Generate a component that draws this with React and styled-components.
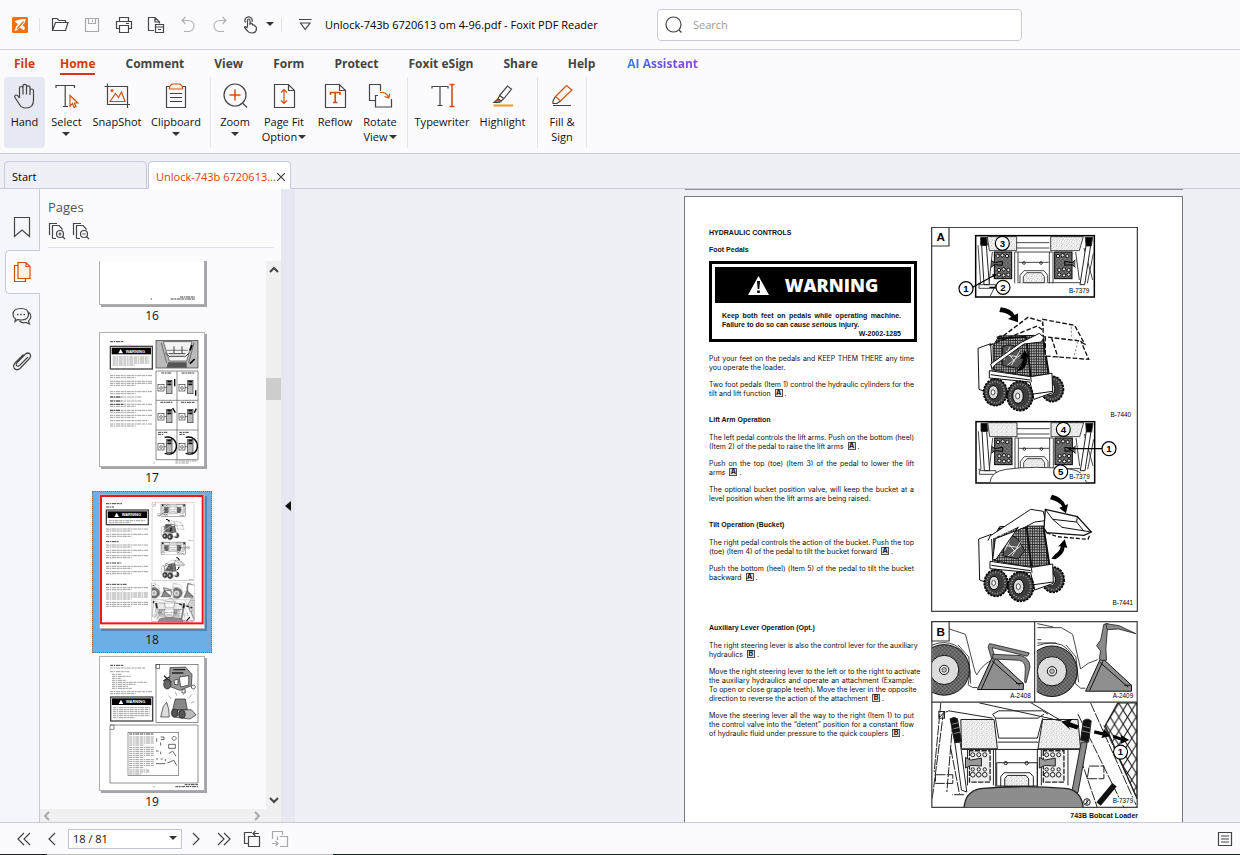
import React from 'react';
import styled, { createGlobalStyle } from 'styled-components';

const GlobalStyle = createGlobalStyle`
    * {
        box-sizing: border-box;
    }

    body {
        margin: 0;
        font-family: 'Open Sans', 'Noto Sans', sans-serif;
        font-size: 11px;
        color: #111;
        background: #fbfbfe;
    }

    button, input, select {
        font: inherit;
        color: inherit;
    }

    button {
        border: 0;
        padding: 0;
        background: none;
    }
`;

const Window = styled.div`
    display: flex;
    flex-direction: column;
    height: 100vh;
    overflow: hidden;
`;

const PatternDefs = styled.svg`
    display: block;
    flex: none;
`;

const Svg = styled.svg`
    display: block;
    flex: none;
    fill: none;
    stroke: #444;
    stroke-width: 1.2;
`;

/* ---------- title bar ---------- */

const TitleBar = styled.header`
    display: flex;
    align-items: center;
    flex: none;
    height: 50px;
    padding: 0 218px 0 12px;
    border-bottom: 1px solid #cbcfdf;
`;

const Divider = styled.div`
    width: 1px;
    height: 14px;
    margin: 0 ${p => p.$after || 4}px 0 ${p => p.$before || 11}px;
    background: #dfe1ea;
`;

const ToolButton = styled.button`
    display: flex;
    align-items: center;
    justify-content: center;
    gap: 6px;
    width: ${p => p.$width || 32}px;
    height: 28px;
`;

const Title = styled.h1`
    margin: 0 0 0 4px;
    padding-top: 1px;
    font-size: 11px;
    line-height: 16px;
    font-weight: 400;
    white-space: nowrap;
    color: #000;
`;

const SearchBox = styled.label`
    display: flex;
    align-items: center;
    gap: 10px;
    flex: 0 1 365px;
    height: 32px;
    margin-left: auto;
    padding: 0 7px;
    border: 1px solid #c9cbdb;
    border-radius: 4px;
    background: #fff;
`;

const SearchInput = styled.input`
    flex: 1;
    min-width: 0;
    border: 0;
    outline: 0;
    padding: 0;
    background: none;

    &::placeholder {
        color: #9b9b9b;
        opacity: 1;
    }
`;

/* ---------- ribbon ---------- */

const MenuTabs = styled.nav`
    display: flex;
    flex: none;
    gap: 30px;
    height: 27px;
    padding: 4px 14px 0;
`;

const MenuTab = styled.a`
    height: 19px;
    margin-right: ${p => (p.$accent && !p.$active ? -5 : 0)}px;
    font-size: 12px;
    line-height: 19px;
    font-weight: 700;
    text-decoration: none;
    white-space: nowrap;
    color: ${p => (p.$accent ? '#cf3a0c' : '#444')};
    box-shadow: 0 ${p => (p.$active ? 2 : 0)}px #cf3a0c;
`;

const AiTab = styled(MenuTab)`
    margin-left: 2px;
    background: linear-gradient(90deg, #3a82ea, #5a55e0 40%, #9540e0);
    background-clip: text;
    color: transparent;
    box-shadow: none;
`;

const Ribbon = styled.div`
    display: flex;
    flex: none;
    height: 77px;
    padding: 0 4px;
    border-bottom: 1px solid #c9cddc;
`;

const RibbonDivider = styled.div`
    width: 1px;
    height: 71px;
    margin: 0 4px;
    background: #e3e5ee;
`;

const RibbonButton = styled.button`
    display: flex;
    flex-direction: column;
    align-items: center;
    flex: none;
    gap: 4px;
    width: ${p => p.$width}px;
    height: 71px;
    padding-top: 5px;
    border-radius: 4px;
    background: ${p => (p.$active ? '#e6e9f1' : 'none')};
`;

const RibbonLabel = styled.span`
    line-height: 15px;
    white-space: nowrap;
    text-align: center;
`;

const Caret = styled.span`
    display: ${p => (p.$inline ? 'inline-block' : 'block')};
    width: 0;
    margin: ${p => (p.$inline ? '0 0 2px 1px' : '3px auto 0')};
    border: solid transparent;
    border-width: 4px 4px 0;
    border-top-color: #333;
`;

/* ---------- document tabs ---------- */

const DocTabs = styled.div`
    display: flex;
    align-items: flex-end;
    flex: none;
    gap: 1px;
    height: 35px;
    padding: 0 4px;
    background: #eff0f5;
    border-bottom: 1px solid #c6cadb;
`;

const DocTab = styled.div`
    display: flex;
    align-items: center;
    justify-content: space-between;
    width: 143px;
    height: 28px;
    margin-bottom: -1px;
    padding: 3px 5px 0 7px;
    border: 1px solid #c6cadb;
    border-bottom-color: ${p => (p.$active ? '#fff' : '#c6cadb')};
    border-radius: 4px 4px 0 0;
    background: ${p => (p.$active ? '#fff' : '#eff0f5')};
    color: ${p => (p.$active ? '#d0450f' : '#000')};
    white-space: nowrap;
`;

/* ---------- body ---------- */

const Body = styled.main`
    display: flex;
    flex: 1;
    min-height: 0;
`;

const Rail = styled.nav`
    display: flex;
    flex-direction: column;
    flex: none;
    gap: 1px;
    width: 40px;
    padding: 16px 0 0 5px;
    background: #f5f6fb;
    box-shadow: inset -1px 0 #c6cadb;
`;

const RailButton = styled.button`
    display: flex;
    align-items: center;
    justify-content: center;
    height: 44px;
    padding-right: 3px;
    border: 1px solid ${p => (p.$active ? '#c6cadb' : 'transparent')};
    border-right: 0;
    border-radius: 5px 0 0 5px;
    background: ${p => (p.$active ? '#fbfbfe' : 'none')};
`;

const Panel = styled.aside`
    display: flex;
    flex-direction: column;
    flex: none;
    width: 241px;
    background: #fbfbfe;
`;

const PanelHead = styled.div`
    margin: 0 7px 13px 8px;
    padding: 9px 0 7px;
    border-bottom: 1px solid #dddfe9;
`;

const PanelTitle = styled.h2`
    margin: 0 0 5px;
    font-size: 13px;
    line-height: 19px;
    font-weight: 400;
    color: #555;
`;

const PanelTools = styled.div`
    display: flex;
    gap: 6px;
`;

const PanelBody = styled.div`
    display: flex;
    flex: 1;
    min-height: 0;
`;

const ThumbArea = styled.div`
    flex: 1;
    overflow: hidden;
`;

const ThumbList = styled.div`
    display: flex;
    flex-direction: column;
    align-items: center;
    margin-top: -94px;
    padding-right: 2px;
`;

const ThumbItem = styled.button`
    display: flex;
    flex-direction: column;
    align-items: center;
    flex: none;
    width: 120px;
    height: 162px;
    padding-top: 2px;
    border: 1px ${p => (p.$active ? 'dotted #8a6a55' : 'solid transparent')};
    background: ${p => (p.$active ? '#6caee6' : 'none')};
`;

const ThumbPage = styled.svg`
    display: block;
    flex: none;
    width: 106px;
    height: 135px;
    margin-bottom: 2px;
    border: 1px solid #aeb0b4;
    background: #fff;
    box-shadow: 2px 2px 0 ${p => (p.$active ? '#4f86b8' : '#a2a4a8')};
`;

const ThumbLabel = styled.span`
    font-size: 12px;
    line-height: 18px;
`;

const ScrollBar = styled.div`
    display: flex;
    flex-direction: column;
    align-items: center;
    justify-content: space-between;
    width: 15px;
    padding: 4px 0;
    background: #f0f0f1;
`;

const ScrollThumb = styled.div`
    width: 15px;
    height: 22px;
    margin-bottom: 292px;
    background: #cdcdcd;
`;

const ScrollBottom = styled.div`
    display: flex;
    align-items: center;
    justify-content: space-between;
    flex: none;
    height: 13px;
    padding: 0 19px 0 2px;
    background: #f0f0f1;
`;

const Splitter = styled.button`
    display: flex;
    align-items: center;
    justify-content: center;
    flex: none;
    width: 14px;
    background: #e5e8f1;
`;

const DocView = styled.section`
    display: flex;
    flex-direction: column;
    align-items: flex-end;
    flex: 1;
    overflow: hidden;
    padding-right: 57px;
    background: #eff0f5;
`;

const PageEdge = styled.div`
    flex: none;
    width: 498px;
    height: 1px;
    margin-bottom: 6px;
    background: #90929e;
`;

/* ---------- manual page ---------- */

const Sheet = styled.article`
    display: grid;
    grid-template-columns: 208px 207px;
    column-gap: 14px;
    align-items: start;
    flex: none;
    width: 499px;
    height: 660px;
    padding: 30px 0 0 24px;
    border: 1px solid #77787f;
    background: #fff;
    color: #111;
    font-family: 'Liberation Sans', Arial, sans-serif;
    font-size: 7px;
    line-height: 9px;
`;

const Column = styled.div`
    display: flex;
    flex-direction: column;
    min-width: 0;
`;

const Heading = styled.h3`
    margin: ${p => p.$top || 0}px 0 ${p => (p.$tight ? 8 : 9)}px;
    font-size: 7px;
    line-height: 9px;
`;

const Para = styled.p`
    margin: 0 3px 8px 0;
    font-family: Inter, 'Liberation Sans', sans-serif;

    & + h3 {
        margin-top: 9px;
    }

    & + h3.far {
        margin-top: 33px;
    }
`;

const Line = styled.span`
    display: block;
    height: 9px;
    white-space: nowrap;
    text-align-last: ${p => (p.$full ? 'justify' : 'left')};
`;

const Ref = styled.b`
    display: inline-block;
    width: 8px;
    height: 8px;
    margin: 0 2px;
    border: 1px solid #555;
    background: #e2e2e2;
    line-height: 6px;
    text-align: center;
    text-align-last: center;
    vertical-align: top;
`;

const Warning = styled.div`
    height: 81px;
    margin: -1px 0 12px;
    padding: 3px;
    border: 3px solid #000;
    font-weight: 700;
`;

const WarningBanner = styled.div`
    display: flex;
    align-items: center;
    justify-content: center;
    gap: 16px;
    height: 36px;
    margin-bottom: 8px;
    background: #000;
    color: #fff;
    font-family: 'Open Sans', sans-serif;
    font-size: 18px;
    line-height: 20px;
    font-weight: 800;
`;

const WarningLine = styled(Line)`
    margin: 0 10px 0 7px;
    text-align-last: ${p => p.$align};
`;

const Figure = styled.svg`
    display: block;
    width: 207px;
    height: ${p => p.$height}px;
    margin-bottom: ${p => p.$gap}px;
`;

const Footer = styled.p`
    margin: 0;
    font-weight: 700;
    text-align: right;
`;

/* ---------- status bar ---------- */

const StatusBar = styled.footer`
    display: flex;
    align-items: center;
    flex: none;
    height: 32px;
    padding: 0 1px 0 10px;
    border-top: 1px solid #c6cadb;
`;

const NavButton = styled.button`
    display: flex;
    align-items: center;
    justify-content: center;
    width: 28px;
    height: 24px;
    margin-left: ${p => (p.$push ? 'auto' : 0)};
`;

const PageBox = styled.label`
    display: flex;
    align-items: center;
    width: 114px;
    height: 20px;
    margin: 0 0 0 2px;
    padding-right: 4px;
    border: 1px solid #c0c4d6;
    background: #fff;
`;

const PageSelect = styled.select`
    flex: 1;
    height: 18px;
    padding: 0 4px;
    border: 0;
    outline: 0;
    appearance: none;
    background: none;
`;

const BottomEdge = styled.div`
    flex: none;
    height: 1px;
    background: linear-gradient(90deg, #222 47px, #b9bbbf 47px, #b9bbbf 333px, #14252a 333px);
`;

/* ---------- icons ---------- */

const O = '#d2500f';

const Icon = ({ size = 18, children, ...rest }) => (
    <Svg width={size} height={size} viewBox={`0 0 ${size} ${size}`} aria-hidden="true" {...rest}>{children}</Svg>
);

const Logo = () => (
    <Icon size={16}>
        <rect width="16" height="16" rx="1.5" fill="#f0700f" stroke="none" />
        <path d="M2.5 4.2Q7 2 13.8 2Q13.2 6 10.5 8.2L13 10.5L12 13.6L8 10.6Q6 13.5 2.6 13.9Q3 10 6 7.3Z" fill="#fff" stroke="none" />
        <path d="M5 12L11.5 4.5" stroke="#f0700f" />
    </Icon>
);

const OpenIcon = () => <Icon><path d="M1.5 14.5V2.5H6L8 4.5H14.5V6.5M1.5 14.5L4.5 6.5H17L14.5 14.5Z" /></Icon>;
const SaveIcon = () => <Icon opacity="0.45"><path d="M2.500 2.500H15.500V15.500H2.500ZM5.500 2.500V7.500H12.500V2.500M9.500 4V6" /></Icon>;
const PrintIcon = () => <Icon><path d="M4.500 5.500V1.500H13.500V5.500M4.500 12.500H1.500V5.500H16.500V12.500H13.500M4.500 9.500H13.500V16.500H4.500ZM11 7.500H14" /></Icon>;
const PageDocIcon = () => <Icon><path d="M7 14.500H1.500V1.500H8L12.500 6V7.500M8 1.500V6H12.500M8.500 8.500H16.500V16.500H8.500ZM8.500 11H16.500M11 13.500H14" /></Icon>;
const UndoIcon = () => <Icon opacity="0.4"><path d="M6.500 1L3 4.500L6.500 8M3 4.500H9.500A5.500 5.500 0 0 1 9.500 15.500H5" /></Icon>;
const RedoIcon = () => <Icon opacity="0.4"><path d="M11.500 1L15 4.500L11.500 8M15 4.500H8.500A5.500 5.500 0 0 0 8.500 15.500H13" /></Icon>;
const TouchIcon = () => (
    <Icon>
        <path d="M6.500 11V4.500Q6.500 3 7.700 3Q9 3 9 4.500V9M9 7.500Q11.500 7 11.500 9Q14 8.500 14 10.300Q15.500 10.500 15.500 12Q15.500 17 11 17Q8 17 6.500 15L3.500 11.500Q3.500 9.500 6.500 12" />
        <path d="M4.500 6.500A3.700 3.700 0 1 1 11 6" />
    </Icon>
);
const CustomizeIcon = () => <Icon><path d="M3 3.500H15.500M4.500 7H14L9.200 13.500Z" /></Icon>;
const SearchIcon = () => <Icon><circle cx="8.500" cy="8.500" r="7.500" /><path d="M14 14L16.500 16.500" /></Icon>;

const HandIcon = () => (
    <Icon size={28}>
        <path d="M8.500 16V6.500Q8.500 4.500 10.200 4.500Q12 4.500 12 6.500V12.500M12 6V4Q12 2.300 13.700 2.300Q15.500 2.300 15.500 4V12.500M15.500 5.500Q15.500 3.800 17.200 3.800Q19 3.800 19 5.500V13M19 8.500Q19 7 20.700 7Q22.500 7 22.500 9V18Q22.500 26 15 26Q10.500 26 8.500 22.500L4 15.500Q3.200 13.500 5 13Q6.500 12.800 8.500 16" />
    </Icon>
);
const SelectIcon = () => (
    <Icon size={28}>
        <path d="M3 6V3.500H21.500V6M12.200 3.500V24.500M10 24.500H15" />
        <path d="M17 13.500V24L19.500 21.500L21 25.500L23 24.700L21.500 21H25Z" stroke={O} />
    </Icon>
);
const SnapIcon = () => (
    <Icon size={28}>
        <path d="M4.500 1.500V22.500H27M1.500 4.500H24.500V26" />
        <path d="M7 19.500L12.500 11.500L15.500 15.500L18.500 10L22 19.500Z" stroke={O} />
        <circle cx="9" cy="8.500" r="1" stroke={O} />
    </Icon>
);
const ClipboardIcon = () => (
    <Icon size={28}>
        <path d="M7.500 4.500H4.500V25.500H23.500V4.500H20.500M8 11.500H20M8 15.500H20M8 19.500H20" />
        <path d="M7.500 7V4.500L10 2H18L20.500 4.500V7Z" stroke={O} fill="#fff3e6" />
    </Icon>
);
const ZoomIcon = () => (
    <Icon size={28}>
        <circle cx="14" cy="13" r="11" /><path d="M21.500 21L26 25.500" />
        <path d="M14 7.500V18.500M8.500 13H19.500" stroke={O} strokeWidth="1.5" />
    </Icon>
);
const PageShape = () => <path d="M4.500 2.500H18.500L24.500 8.500V25.500H4.500ZM18.500 2.500V8.500H24.500" />;
const FitIcon = () => (
    <Icon size={28}><PageShape /><path d="M14 7.500V21.500M11 10.500L14 7.500L17 10.500M11 18.500L14 21.500L17 18.500" stroke={O} /></Icon>
);
const ReflowIcon = () => (
    <Icon size={28}><PageShape /><path d="M9.500 13V10.500H19V13M14.200 10.500V20.500M12 20.500H16.500" stroke={O} strokeWidth="1.600" /></Icon>
);
const RotateIcon = () => (
    <Icon size={28}>
        <path d="M9 18.500H3.500V2.500H14.500V9M12 13.500H9.500V25H25.500V17" />
        <path d="M14 10.500H17Q21 11 22.500 15.500M18.500 14.500L22.800 16L23.800 11.500" stroke={O} />
    </Icon>
);
const TypeIcon = () => (
    <Icon size={28}>
        <path d="M4 6.500V4.500H20V6.500M12 4.500V23.500M9.500 23.500H14.500" />
        <path d="M21.500 2.500H26.500M24 2.500V24.500M21.500 24.500H26.500" stroke={O} strokeWidth="1.600" />
    </Icon>
);
const HighlightIcon = () => (
    <Icon size={28}>
        <path d="M10.500 13.500L18.500 4L22.500 7L15 16.500ZM10.500 13.500L9 17L12 19L15 16.500" />
        <path d="M9 17L5 20.500H10.500L12 19Z" fill="#e8671b" />
        <path d="M4.500 23.500H24" stroke="#f0a030" strokeWidth="2.200" />
    </Icon>
);
const FillIcon = () => (
    <Icon size={28}>
        <path d="M7.500 14.500L5 19V21.500H9L12.500 19M5 23.500H23" />
        <path d="M7.500 14.500L18.500 3.500L24 8L12.500 19Z" stroke={O} fill="#fff3e6" />
    </Icon>
);

const BookmarkIcon = () => <Icon size={22}><path d="M3.500 1.500H18.500V20.500L11 14L3.500 20.500Z" /></Icon>;
const PagesIcon = () => (
    <Icon size={22}>
        <path d="M7 4.500H3.500V20.500H14.500V18" stroke={O} />
        <path d="M7 1.500H15L19 5.500V17.500H7ZM15 1.500V5.500H19" stroke={O} fill="#fff3e0" />
    </Icon>
);
const CommentIcon = () => (
    <Icon size={22}>
        <path d="M4 15.500L4.500 13Q2 11.500 2 8.500Q2 2.500 10 2.500Q17.500 2.500 17.500 8.500Q17.500 14 10 14Q8 14 6.500 13.500Z" />
        <path d="M17.500 6Q20 8 19.800 11Q19.500 13.500 17.500 15L18.500 18L15 16.500Q11 17.500 8.500 15" />
        <path d="M6 8.500H7.500M9.200 8.500H10.700M12.500 8.500H14" strokeWidth="1.600" />
    </Icon>
);
const ClipIcon = () => (
    <Icon size={22}><path d="M17 7L8.500 15.500Q6.500 17 5.500 15.500Q4.500 14.500 6 12.800L14.500 4Q17 2 19 4Q20.500 6 18.500 8.500L9 18.500Q6 21 3.500 18.500Q1.500 16 4 13L12.500 4.500" transform="translate(0 -1)" /></Icon>
);
const ThumbZoomIcon = ({ plus }) => (
    <Icon>
        <path d="M1.500 13V1.500H9M4.500 16.500V3.500H11L14.500 7.500M4.500 16.500H8" />
        <circle cx="12" cy="12" r="3.500" /><path d="M14.500 14.500L17 17M10.500 12H13.500" />
        {plus && <path d="M12 10.500V13.500" />}
    </Icon>
);

const Chevron = ({ double, flip }) => (
    <Icon size={16} transform={flip ? 'scale(-1 1)' : undefined}>
        {double ? <path d="M8 2L2 8L8 14M14 2L8 8L14 14" /> : <path d="M11 2L5 8L11 14" />}
    </Icon>
);
const PrevViewIcon = () => <Icon><path d="M5.500 13.500H1.500V2.500H9M5.500 6.500H16.500V16.500H5.500ZM16 3.500H10M12.500 1L10 3.500L12.500 6" /></Icon>;
const NextViewIcon = () => <Icon opacity="0.45"><path d="M1.500 9V1.500H11.500V5M9 6.500H16.500V16.500H9M6.500 6.500V10M1 13.500H7M4.500 11L7 13.500L4.500 16" /></Icon>;
const ListIcon = () => <Icon><path d="M2.500 2.500H15.500V15.500H2.500ZM5 6H13M5 9H13M5 12H13" /></Icon>;

/* ---------- line art of the manual ---------- */

const Patterns = () => (
    <PatternDefs width="0" height="0" aria-hidden="true">
        <defs>
            <pattern id="speck" width="15" height="13" patternUnits="userSpaceOnUse">
                <path d="M2 2h2M8 1h2M13 5h2M5 6h2M10 8h2M1 10h2M7 12h2" stroke="#444" strokeWidth="1.800" />
            </pattern>
            <pattern id="tone" width="4" height="4" patternUnits="userSpaceOnUse">
                <rect width="4" height="4" fill="#8c8c8c" />
                <path d="M0 1h2M2 3h2" stroke="#222" strokeWidth="1.400" />
            </pattern>
            <pattern id="mesh" width="7" height="8" patternUnits="userSpaceOnUse">
                <rect width="7" height="8" fill="#aaa" />
                <path d="M0 1h7M1 0v8" stroke="#111" strokeWidth="2.200" />
            </pattern>
            <pattern id="fence" width="26" height="42" patternUnits="userSpaceOnUse">
                <path d="M0 0L26 42M26 0L0 42" stroke="#111" strokeWidth="3" />
            </pattern>
        </defs>
    </PatternDefs>
);

const Callout = ({ x, y, n }) => (
    <g>
        <circle cx={x} cy={y} r="21" fill="#fff" stroke="#000" strokeWidth="3.500" />
        <text x={x} y={y + 10} fontSize="29" fontWeight="700" textAnchor="middle" fill="#000" stroke="none">{n}</text>
    </g>
);

const Pedal = ({ x, y, flip }) => (
    <g transform={`translate(${x} ${y})`}>
        <rect width="52" height="80" fill="url(#tone)" stroke="#000" strokeWidth="3" />
        {[[10, 12], [24, 10], [38, 12], [14, 54], [28, 52], [42, 54], [14, 68], [28, 70], [42, 68]].map(([a, b]) => (
            <circle key={a + '-' + b} cx={a} cy={b} r="5" fill="#ddd" stroke="#000" strokeWidth="2.500" />
        ))}
        <path d={flip ? 'M62 24L52 32L30 28V40L52 38L62 46' : 'M-10 24L0 32L24 28V40L0 38L-10 46'} fill="#666" stroke="#000" strokeWidth="3" />
    </g>
);

const Cockpit = ({ seat }) => (
    <g fill="none" stroke="#222" strokeWidth="2.500">
        <rect x="155" y="47" width="356" height="184" fill="#fff" stroke="#000" strokeWidth="4.500" />
        <path d="M190 50H278V92H196Z" fill="url(#speck)" />
        <path d="M380 50H478L466 92H380Z" fill="url(#speck)" />
        <path d="M278 68H376M278 84H376M272 96H386M272 96V190M282 96V190M376 96V190M387 96V190M284 127H374M284 188H470" />
        <circle cx="300" cy="129" r="4" /><circle cx="351" cy="129" r="4" />
        <path d="M288 188V166L300 152H360L371 166V188" fill="#fff" />
        <path d="M298 188V170L308 158H352L361 170V188Z" fill="url(#speck)" />
        <Pedal x={211} y={96} /><Pedal x={392} y={96} flip />
        <path d="M162 76L170 190H162M205 96L195 190M455 96L466 180M508 100L490 190M480 84L506 180" />
        <path d="M173 76L180 194H196L187 76ZM486 76L468 194H482L500 76Z" fill="#fff" strokeWidth="3" />
        <path d="M170 52H188L190 76H170ZM484 52H506L502 78H486Z" fill="#000" />
        <path d="M165 194H215V205H165Z" />
        {seat && <path d="M197 229Q200 196 246 190Q330 178 440 190Q480 196 486 229" fill="#fff" />}
        {!seat && <path d="M198 229L216 194" />}
        <path d="M434 202H498V222H434Z" fill="#fff" stroke="none" />
        <text x="496" y="218" fontSize="19" textAnchor="end" fill="#000" stroke="none">B-7379</text>
    </g>
);

const Wheel = ({ x, y, r }) => (
    <g>
        <ellipse cx={x} cy={y} rx={r * 0.88} ry={r} fill="#3c3c3c" stroke="#000" strokeWidth="5" strokeDasharray="7 3" />
        <ellipse cx={x} cy={y} rx={r * 0.68} ry={r * 0.8} fill="none" stroke="#999" strokeWidth="5" strokeDasharray="3 5" />
        <ellipse cx={x - 6} cy={y} rx={r * 0.36} ry={r * 0.5} fill="#ddd" stroke="#000" strokeWidth="3" />
        <ellipse cx={x - 7} cy={y} rx={r * 0.14} ry={r * 0.2} fill="#fff" stroke="#000" strokeWidth="2" />
    </g>
);

const Loader = () => (
    <g fill="none" stroke="#111" strokeWidth="3">
        <Wheel x={385} y={507} r={38} />
        <path d="M162 385L200 371L207 500L178 513L165 508Z" fill="#fff" />
        <path d="M207 378L225 348L356 346L374 462L320 470L208 450Z" fill="url(#mesh)" />
        <path d="M236 380Q262 366 282 388L300 420L280 445L236 436Z" fill="#555" />
        <path d="M246 392L272 424M258 380L240 420M288 392L262 436M236 404L280 410M250 436L290 404" stroke="#ddd" />
        <path d="M306 350L320 468M356 346L374 462M222 356L306 350" strokeWidth="6" />
        <path d="M196 452L320 470L384 460L386 518L330 538L318 486L196 474Z" fill="#fff" />
        <path d="M320 470L322 486M200 464L318 480M328 522L386 514" />
        <Wheel x={214} y={517} r={40} />
        <Wheel x={288} y={528} r={44} />
    </g>
);

const ArtA = () => (
    <g fontFamily="Liberation Sans, Arial, sans-serif">
        <rect x="23" y="22" width="617" height="1152" fill="#fff" stroke="#333" strokeWidth="3.500" />
        <path d="M75 22V78H23" fill="none" stroke="#333" strokeWidth="3.500" />
        <text x="50" y="64" fontSize="35" fontWeight="700" textAnchor="middle">A</text>
        <Cockpit />
        <path d="M146 202L214 164M214 202L196 202" stroke="#000" strokeWidth="3.500" />
        <path d="M218 162L204 163L210 173Z" />
        <Callout x={235} y={70} n="3" /><Callout x={126} y={206} n="1" /><Callout x={237} y={202} n="2" />
        <Loader />
        <g fill="none" stroke="#111" strokeWidth="4" strokeDasharray="14 6">
            <path d="M218 352L240 346L312 292L350 303L380 348M196 376L340 318L366 338" />
            <path d="M356 298L452 316L482 372L462 362L358 350ZM364 350L364 408L494 418L470 362M382 352L402 412" fill="#fff" />
        </g>
        <path d="M204 446L200 432L290 368L346 340L360 352L352 366L300 372L214 434Z" fill="#fff" stroke="#111" strokeWidth="3" />
        <path d="M442 320V350M462 364L450 410" stroke="#555" strokeWidth="2" strokeDasharray="7 5" fill="none" />
        <path d="M230 262Q262 266 272 285L282 280V307L252 297L262 291Q250 278 226 276Z" />
        <path d="M274 458L298 446Q312 434 308 412L316 416L302 390L288 418L297 415Q296 436 274 458Z" />
        <text x="621" y="592" fontSize="19" textAnchor="end">B-7440</text>
        <g transform="translate(1 558)">
            <Cockpit seat />
            <path d="M434 128H536" stroke="#000" strokeWidth="3.500" />
            <path d="M428 128L440 123V133Z" />
            <Callout x={417} y={70} n="4" /><Callout x={554} y={128} n="1" /><Callout x={409} y={198} n="5" />
        </g>
        <g transform="translate(2 572)">
            <Loader />
            <path d="M190 390L196 376L300 308L318 296L356 302L362 330L330 334L300 350L212 384L204 448L214 446L282 348" fill="#fff" stroke="#111" strokeWidth="3" />
            <path d="M362 296L458 318L500 364L478 374L366 366L358 352Z" fill="#fff" stroke="#111" strokeWidth="4" />
            <path d="M362 296L384 326L412 350L500 364M384 326L456 334L478 362M456 334L458 318" fill="none" stroke="#111" strokeWidth="3" />
            <path d="M366 366L398 378L490 386L496 372" fill="none" stroke="#111" strokeWidth="4" strokeDasharray="12 6" />
            <path d="M382 252Q412 258 422 284L430 280L424 308L404 292L413 287Q402 272 376 266Z" />
            <path d="M380 444L392 430Q408 420 408 406L400 408L420 386L428 412L420 410Q418 432 392 446Z" />
        </g>
        <text x="627" y="1156" fontSize="19" textAnchor="end">B-7441</text>
    </g>
);

const Tire = ({ x, y }) => (
    <g>
        <circle cx={x} cy={y} r="76" fill="url(#tone)" stroke="#111" strokeWidth="3" />
        <circle cx={x} cy={y} r="44" fill="#ddd" stroke="#111" strokeWidth="3" />
        <circle cx={x} cy={y} r="14" fill="#eee" stroke="#111" strokeWidth="3" />
        <circle cx={x} cy={y} r="7" fill="#bbb" stroke="#111" strokeWidth="2" />
    </g>
);

const Bucket = () => (
    <g stroke="#111" strokeWidth="3">
        <path d="M160 232L204 136L218 140L298 214V232Z" fill="#8f8f8f" />
        <path d="M172 230L212 142M204 146L288 220M276 214H298" fill="none" />
    </g>
);

const ArtB = () => (
    <g fontFamily="Liberation Sans, Arial, sans-serif">
        <clipPath id="leftTire"><rect x="24" y="80" width="308" height="190" /></clipPath>
        <clipPath id="rightTire"><rect x="338" y="28" width="302" height="242" /></clipPath>
        <clipPath id="cab"><rect x="24" y="271" width="616" height="315" /></clipPath>
        <rect x="23" y="28" width="617" height="558" fill="#fff" stroke="#333" strokeWidth="3.500" />
        <g fill="none" stroke="#222" strokeWidth="2.500">
            <path d="M76 50L124 66L152 176L158 188Q176 156 200 146M24 98Q60 84 92 98Q132 122 138 180L132 218L146 226H160M102 98L134 134L140 214" />
            <g clipPath="url(#leftTire)"><Tire x={60} y={173} /></g>
            <Bucket />
            <path d="M196 94L206 96L316 122L310 132L204 106L214 138L202 138L192 104Z" fill="#8a8a8a" />
            <path d="M206 126L290 130Q316 136 318 164L306 212L302 210L304 170Q304 148 286 144L206 140Z" fill="#8a8a8a" />
            <path d="M340 46H412L446 66L470 170Q490 150 522 142M340 100Q380 86 414 98Q454 122 460 180L454 214L470 228H484M340 34L388 44M426 98L456 134L464 210M340 82H352M340 92H396L400 96" />
            <g clipPath="url(#rightTire)"><Tire x={384} y={177} /></g>
            <g transform="translate(325 5)"><Bucket /></g>
            <path d="M540 36L552 34L550 60L546 108L548 144H534L526 140L530 116L518 100L530 84Z" fill="#8a8a8a" />
            <path d="M546 34L586 40L636 64L584 50L550 52Z" fill="#8a8a8a" />
        </g>
        <path d="M23 270H640M332 28V270" stroke="#333" strokeWidth="3.500" />
        <path d="M75 28V86H23V28Z" fill="#fff" stroke="#333" strokeWidth="3.500" />
        <text x="50" y="72" fontSize="35" fontWeight="700" textAnchor="middle">B</text>
        <text x="320" y="257" fontSize="19" textAnchor="end">A-2408</text>
        <text x="628" y="257" fontSize="19" textAnchor="end">A-2409</text>
        <g clipPath="url(#cab)" fill="none" stroke="#222" strokeWidth="3">
            <path d="M544 340L582 272H640V560L600 470Z" fill="url(#fence)" strokeWidth="4" />
            <path d="M64 300L74 296L206 318M206 306L224 296H356L372 306M206 306L214 318H342L360 306" />
            <path d="M110 322H210L220 410H112Z" fill="url(#speck)" />
            <path d="M356 322H462L470 410H342Z" fill="url(#speck)" />
            <path d="M214 318L224 378H340L356 318M220 390H344M130 410V520M208 410V520M215 410V524M340 410V524M352 410V520M432 410V520M112 412H470M218 452H340V522H218Z" />
            <circle cx="245" cy="453" r="5" /><circle cx="308" cy="453" r="5" />
            <path d="M230 524V494L240 482H318L328 494V524" />
            <path d="M242 524V500L250 490H306L314 500V524Z" fill="url(#speck)" />
            {[146, 368].map(x => (
                <g key={x}>
                    <path d={`M${x - 10} 416V510H${x + 52}V416Z`} fill="#eee" strokeWidth="4" strokeDasharray="16 4" />
                    {[0, 18, 36].map(d => (
                        <g key={d}>
                            <circle cx={x + d} cy="428" r="6" /><circle cx={x + d} cy="488" r="7" /><circle cx={x + d} cy="472" r="5" />
                        </g>
                    ))}
                    <path d={`M${x - 22} 436L${x - 6} 444L${x + 26} 438V462L${x - 6} 460L${x - 22} 468Z`} fill="#999" />
                </g>
            ))}
            <path d="M24 560L58 300M50 272L30 480M34 488H86V514H34ZM86 330L68 540M80 410L106 546M120 548H84M500 272L640 586M462 306L600 586M540 340L640 560M470 440L520 586M496 462H540V500H490Z" strokeDasharray="30 4" />
            <path d="M92 390L112 534L128 540L108 390Z" fill="#fff" />
            <path d="M472 390L444 538L462 542L490 390Z" fill="#888" />
            <path d="M78 320Q90 312 100 320L112 388L92 392Z" fill="#111" />
            <path d="M478 326Q490 316 502 326L494 390L470 384Z" fill="#111" />
            <path d="M84 336L102 332M88 350L104 346M90 364L108 360M476 342L500 348M474 356L498 362" stroke="#888" />
            <path d="M120 588Q122 540 168 530Q300 518 432 530Q474 540 478 588Z" fill="#8d8d8d" strokeWidth="4" />
            <path d="M165 272L410 326M318 270L412 326" />
            <path d="M524 576L572 518" stroke="#111" strokeWidth="17" />
            <rect x="44" y="298" width="17" height="20" /><path d="M48 314L58 302" />
            <circle cx="489" cy="570" r="10" fill="#fff" /><path d="M484 576L494 564M489 562V578" />
        </g>
        <path d="M412 328L446 320L438 330L464 340L460 352L434 344L440 354ZM512 354L538 360L540 350L560 372L532 378L536 370L510 364ZM568 368L592 376L590 368L616 384L590 396L592 386L568 378Z" />
        <Callout x={590} y={420} n="1" />
        <path d="M562 556H632V578H562Z" fill="#fff" />
        <text x="628" y="574" fontSize="19" textAnchor="end">B-7379</text>
    </g>
);

/* ---------- thumbnails ---------- */

const Rows = ({ rows }) => rows.map(([x, y, w, n = 1, bold]) => (
    Array.from({ length: n }, (_, i) => (
        <path
            key={`${x}-${y}-${i}`}
            d={`M${x} ${y + i * 6}h${n > 1 && i === n - 1 ? w * 0.6 : w}`}
            stroke={bold ? '#444' : '#8c8c8c'}
            strokeWidth={bold ? 3 : 2.5}
            strokeDasharray="9 2 5 2 12 2"
        />
    ))
));

const MiniWarning = ({ x, y, h, lines }) => (
    <g>
        <rect x={x + 2} y={y + 2} width="126" height={h} fill="#fff" stroke="#444" strokeWidth="4" />
        <rect x={x + 6} y={y + 6} width="118" height="20" fill="#000" />
        <path d={`M${x + 26} ${y + 23}L${x + 33} ${y + 10}L${x + 40} ${y + 23}Z`} fill="#fff" />
        <text x={x + 48} y={y + 21} fontSize="12" fontWeight="700" fill="#fff">WARNING</text>
        <Rows rows={[[x + 9, y + 34, 110, lines]]} />
    </g>
);

const Steer = ({ x, y, arrow }) => (
    <g fill="none" stroke="#333" strokeWidth="2">
        <rect x={x} y={y} width="18" height="20" /><circle cx={x + 9} cy={y + 11} r="4" />
        <path d={`M${x + 18} ${y + 10}h8`} />
        <rect x={x + 26} y={y - 12} width="16" height="40" fill="#bbb" />
        <path d={`M${x + 28} ${y - 8}h12M${x + 28} ${y}h12`} stroke="#111" strokeWidth="5" />
        <path d={arrow} transform={`translate(${x} ${y})`} stroke="#000" strokeWidth="4" />
    </g>
);

const thumbs = {
    16: (
        <Rows rows={[[240, 378, 45, 1, true], [212, 384, 72, 1, true], [152, 384, 4, 1, true]]} />
    ),
    17: (
        <g>
            <Rows rows={[
                [30, 26, 40, 1, true], [30, 128, 128, 2], [30, 145, 128, 3], [30, 176, 128, 2], [30, 192, 95],
                [30, 204, 95], [30, 214, 128, 2], [30, 232, 128, 2], [30, 247, 128, 2], [30, 263, 115],
                [30, 273, 128, 2], [226, 384, 66, 2], [160, 390, 5],
            ]} />
            <Rows rows={[[30, 192, 34, 1, true], [30, 204, 34, 1, true], [30, 214, 40, 1, true], [30, 232, 30, 1, true]]} />
            <MiniWarning x={29} y={38} h={68} lines={5} />
            <rect x="168" y="22" width="126" height="83" fill="#bbb" stroke="#333" strokeWidth="2" />
            <path d="M190 26H276L260 84H208ZM200 52H264M184 30L200 90M282 30L266 90" fill="#f4f4f4" stroke="#444" strokeWidth="2" />
            <path d="M204 88H260V104H200Z" fill="#555" />
            <path d="M276 36L270 52M284 78L270 92" stroke="#000" strokeWidth="5" />
            <path d="M206 62h50M210 70h44M222 40v20M246 40v20M196 60l14 12M268 60l-14 12" stroke="#444" strokeWidth="3" />
            <path d="M168 114H294V380H168ZM231 114V380M168 202H294M168 291H294" fill="none" stroke="#555" strokeWidth="2" />
            <Rows rows={[[184, 120, 32, 1, true], [245, 120, 38, 1, true], [181, 208, 36, 1, true], [243, 208, 42, 1, true], [174, 298, 28, 2, true], [238, 298, 28, 2, true]]} />
            <Steer x={174} y={154} arrow="M50 -16V6" /><Steer x={237} y={154} arrow="M50 18V34" />
            <Steer x={174} y={241} arrow="M44 -16L52 -2" /><Steer x={237} y={241} arrow="M46 -2L52 -14" />
            <Steer x={174} y={331} arrow="M20 -18C66 -28 68 46 20 30" /><Steer x={237} y={331} arrow="M20 -18C66 -28 68 46 20 30" />
        </g>
    ),
    18: (
        <g>
            <Rows rows={[
                [18, 26, 50, 1, true], [18, 36, 24, 1, true], [18, 102, 128, 2], [18, 118, 128, 2], [18, 140, 38, 1, true], [18, 150, 128, 2],
                [18, 166, 128, 2], [18, 182, 128, 2], [18, 204, 46, 1, true], [18, 214, 128, 2], [18, 230, 128, 2],
                [18, 268, 64, 1, true], [18, 278, 128, 2], [18, 294, 128, 4], [18, 322, 128, 3], [240, 380, 40, 1, true],
            ]} />
            <MiniWarning x={17} y={43} h={44} lines={2} />
            <svg x="154" y="22" width="130" height="236" viewBox="21 21 621 1155"><ArtA /></svg>
            <svg x="154" y="263" width="130" height="118" viewBox="21 26 621 562"><ArtB /></svg>
            <rect x="3" y="3" width="305" height="382" fill="none" stroke="#f5141c" strokeWidth="6" />
        </g>
    ),
    19: (
        <g>
            <Rows rows={[
                [30, 25, 40, 1, true], [30, 33, 105], [30, 44, 58], [36, 52, 28], [36, 58, 56], [36, 64, 26], [36, 70, 44], [36, 76, 104],
                [36, 82, 70], [36, 88, 50], [36, 94, 60], [30, 104, 128, 2], [254, 383, 40, 1, true], [226, 389, 68, 1, true], [160, 389, 5],
            ]} />
            <MiniWarning x={30} y={118} h={72} lines={6} />
            <rect x="168" y="22" width="126" height="174" fill="none" stroke="#555" strokeWidth="2" />
            <rect x="168" y="22" width="11" height="12" fill="none" stroke="#444" strokeWidth="2" />
            <g stroke="#222" strokeWidth="2">
                <path d="M210 32L256 30L276 52L274 86L240 100L208 88Z" fill="#999" />
                <path d="M238 60L266 56V84L242 90Z" fill="#fff" />
                <path d="M222 70L234 66V84L224 82Z" fill="#eee" />
                <path d="M220 38H256M216 48H250M192 56L214 76M190 72L208 60" strokeWidth="4" />
                <ellipse cx="202" cy="82" rx="11" ry="14" fill="#666" /><circle cx="280" cy="90" r="6" fill="#fff" />
                <path d="M246 98h10v10h-10z" fill="#fff" />
                <path d="M226 126H256L262 158H218Z" fill="#888" />
                <path d="M222 160L274 158L288 174L270 186L220 180Z" fill="#bbb" />
                <ellipse cx="224" cy="168" rx="10" ry="12" fill="#555" /><ellipse cx="246" cy="172" rx="10" ry="12" fill="#555" />
                <path d="M182 180L190 148L200 136L206 156L208 180Z" fill="#ddd" />
                <path d="M214 126L206 116M230 116L226 104M250 114L254 102M266 124L276 112M272 138L284 134" stroke="#888" />
            </g>
            <path d="M30 204H294V378H30ZM30 204h12v13h-12" fill="none" stroke="#555" strokeWidth="2" />
            <rect x="84" y="226" width="152" height="129" fill="none" stroke="#666" strokeWidth="2" />
            <Rows rows={[[88, 231, 72, 1, true], [88, 240, 74, 5], [88, 271, 74, 6], [88, 308, 74, 5], [88, 339, 60, 3]]} />
            <path d="M170 244v10M182 240h10v8h-10M182 256v10M168 282h8M182 284v8M168 306h6M182 306h6M196 306v6M168 320h28M206 262h20v12h-20zM222 238a6 6 0 1 0 1 0M206 290l12-8l10 16M202 318l20-8l8 16" fill="none" stroke="#666" strokeWidth="3" />
        </g>
    ),
};

const menuItems = ['Comment', 'View', 'Form', 'Protect', 'Foxit eSign', 'Share', 'Help'];

const sections = [
    {
        paras: [
            ['Put your feet on the pedals and KEEP THEM THERE any time', 'you operate the loader.'],
            ['Two foot pedals (Item 1) control the hydraulic cylinders for the', 'tilt and lift function', 'A'],
        ],
    },
    {
        title: 'Lift Arm Operation',
        paras: [
            ['The left pedal controls the lift arms. Push on the bottom (heel)', '(Item 2) of the pedal to raise the lift arms', 'A'],
            ['Push on the top (toe) (Item 3) of the pedal to lower the lift', 'arms', 'A'],
            ['The optional bucket position valve, will keep the bucket at a', 'level position when the lift arms are being raised.'],
        ],
    },
    {
        title: 'Tilt Operation (Bucket)',
        paras: [
            ['The right pedal controls the action of the bucket. Push the top', '(toe) (Item 4) of the pedal to tilt the bucket forward', 'A'],
            ['Push the bottom (heel) (Item 5) of the pedal to tilt the bucket', 'backward', 'A'],
        ],
    },
    {
        title: 'Auxiliary Lever Operation (Opt.)',
        far: true,
        paras: [
            ['The right steering lever is also the control lever for the auxiliary', 'hydraulics', 'B'],
            [
                'Move the right steering lever to the left or to the right to activate',
                'the auxiliary hydraulics and operate an attachment (Example:',
                'To open or close grapple teeth). Move the lever in the opposite',
                'direction to reverse the action of the attachment', 'B',
            ],
            [
                'Move the steering lever all the way to the right (Item 1) to put',
                'the control valve into the “detent” position for a constant flow',
                'of hydraulic fluid under pressure to the quick couplers', 'B',
            ],
        ],
    },
];

const Paragraph = ({ lines }) => {
    const last = lines[lines.length - 1];
    const ref = last.length === 1 ? last : null;
    const text = ref ? lines.slice(0, -1) : lines;
    return (
        <Para>
            {text.map((line, i) => (
                <Line key={line} $full={i < text.length - 1}>
                    {line}
                    {ref && i === text.length - 1 && <> <Ref>{ref}</Ref>.</>}
                </Line>
            ))}
        </Para>
    );
};

const ManualPage = () => (
    <Sheet>
        <Column>
            <Heading $top={1} $tight>HYDRAULIC CONTROLS</Heading>
            <Heading $tight>Foot Pedals</Heading>
            <Warning>
                <WarningBanner>
                    <svg width="21" height="19" viewBox="0 0 21 19" aria-hidden="true">
                        <path d="M10.500 0L21 19H0Z" fill="#fff" />
                        <path d="M9 5H12L11.300 13H9.700ZM9.200 14.500H11.800V17H9.200Z" />
                    </svg>
                    WARNING
                </WarningBanner>
                <WarningLine $align="justify">Keep both feet on pedals while operating machine.</WarningLine>
                <WarningLine $align="left">Failure to do so can cause serious injury.</WarningLine>
                <WarningLine $align="right">W-2002-1285</WarningLine>
            </Warning>
            {sections.map((section, i) => (
                <React.Fragment key={i}>
                    {section.title && <Heading className={section.far ? 'far' : undefined}>{section.title}</Heading>}
                    {section.paras.map(lines => <Paragraph key={lines[0]} lines={lines} />)}
                </React.Fragment>
            ))}
        </Column>
        <Column>
            <Figure viewBox="21 21 621 1155" $height={385} $gap={9} role="img" aria-label="Figure A"><ArtA /></Figure>
            <Figure viewBox="21 26 621 562" $height={187} $gap={3} role="img" aria-label="Figure B"><ArtB /></Figure>
            <Footer>743B Bobcat Loader<br />Operation &amp; Maintenance Manual</Footer>
        </Column>
    </Sheet>
);

export default function App() {
    return (
        <Window>
            <GlobalStyle />
            <Patterns />
            <TitleBar>
                <Logo />
                <Divider />
                <ToolButton aria-label="Open"><OpenIcon /></ToolButton>
                <ToolButton aria-label="Save"><SaveIcon /></ToolButton>
                <ToolButton aria-label="Print"><PrintIcon /></ToolButton>
                <ToolButton aria-label="Page setup"><PageDocIcon /></ToolButton>
                <ToolButton aria-label="Undo"><UndoIcon /></ToolButton>
                <ToolButton aria-label="Redo"><RedoIcon /></ToolButton>
                <ToolButton aria-label="Touch mode" $width={42}><TouchIcon /><Caret $inline /></ToolButton>
                <Divider $before={3} $after={7} />
                <ToolButton aria-label="Customize toolbar"><CustomizeIcon /></ToolButton>
                <Title>Unlock-743b 6720613 om 4-96.pdf - Foxit PDF Reader</Title>
                <SearchBox>
                    <SearchIcon />
                    <SearchInput type="text" placeholder="Search" aria-label="Search" />
                </SearchBox>
            </TitleBar>

            <MenuTabs>
                <MenuTab href="#file" $accent>File</MenuTab>
                <MenuTab href="#home" $accent $active>Home</MenuTab>
                {menuItems.map(item => <MenuTab key={item} href="#tab">{item}</MenuTab>)}
                <AiTab href="#ai">AI Assistant</AiTab>
            </MenuTabs>

            <Ribbon>
                <RibbonButton $width={41} $active><HandIcon /><RibbonLabel>Hand</RibbonLabel></RibbonButton>
                <RibbonButton $width={43}><SelectIcon /><RibbonLabel>Select<Caret /></RibbonLabel></RibbonButton>
                <RibbonButton $width={58}><SnapIcon /><RibbonLabel>SnapShot</RibbonLabel></RibbonButton>
                <RibbonButton $width={60}><ClipboardIcon /><RibbonLabel>Clipboard<Caret /></RibbonLabel></RibbonButton>
                <RibbonDivider />
                <RibbonButton $width={40}><ZoomIcon /><RibbonLabel>Zoom<Caret /></RibbonLabel></RibbonButton>
                <RibbonButton $width={58}><FitIcon /><RibbonLabel>Page Fit<br />Option<Caret $inline /></RibbonLabel></RibbonButton>
                <RibbonButton $width={44}><ReflowIcon /><RibbonLabel>Reflow</RibbonLabel></RibbonButton>
                <RibbonButton $width={46}><RotateIcon /><RibbonLabel>Rotate<br />View<Caret $inline /></RibbonLabel></RibbonButton>
                <RibbonDivider />
                <RibbonButton $width={60}><TypeIcon /><RibbonLabel>Typewriter</RibbonLabel></RibbonButton>
                <RibbonButton $width={61}><HighlightIcon /><RibbonLabel>Highlight</RibbonLabel></RibbonButton>
                <RibbonDivider />
                <RibbonButton $width={40}><FillIcon /><RibbonLabel>Fill &amp;<br />Sign</RibbonLabel></RibbonButton>
                <RibbonDivider />
            </Ribbon>

            <DocTabs>
                <DocTab>Start</DocTab>
                <DocTab $active>
                    Unlock-743b 6720613...
                    <button aria-label="Close tab"><Icon size={8}><path d="M0 0L8 8M8 0L0 8" /></Icon></button>
                </DocTab>
            </DocTabs>

            <Body>
                <Rail>
                    <RailButton aria-label="Bookmarks"><BookmarkIcon /></RailButton>
                    <RailButton aria-label="Pages" $active><PagesIcon /></RailButton>
                    <RailButton aria-label="Comments"><CommentIcon /></RailButton>
                    <RailButton aria-label="Attachments"><ClipIcon /></RailButton>
                </Rail>
                <Panel>
                    <PanelHead>
                        <PanelTitle>Pages</PanelTitle>
                        <PanelTools>
                            <button aria-label="Enlarge thumbnails"><ThumbZoomIcon plus /></button>
                            <button aria-label="Reduce thumbnails"><ThumbZoomIcon /></button>
                        </PanelTools>
                    </PanelHead>
                    <PanelBody>
                        <ThumbArea>
                            <ThumbList>
                                {[16, 17, 18, 19].map(n => (
                                    <ThumbItem key={n} $active={n === 18}>
                                        <ThumbPage viewBox="0 0 312 399" $active={n === 18} fontFamily="Liberation Sans, Arial, sans-serif">{thumbs[n]}</ThumbPage>
                                        <ThumbLabel>{n}</ThumbLabel>
                                    </ThumbItem>
                                ))}
                            </ThumbList>
                        </ThumbArea>
                        <ScrollBar>
                            <Icon size={10}><path d="M1 7L5 3L9 7" strokeWidth="2" /></Icon>
                            <ScrollThumb />
                            <Icon size={10}><path d="M1 3L5 7L9 3" strokeWidth="2" /></Icon>
                        </ScrollBar>
                    </PanelBody>
                    <ScrollBottom>
                        <Icon size={10} opacity="0.4"><path d="M7 1L3 5L7 9" strokeWidth="2" /></Icon>
                        <Icon size={10} opacity="0.4"><path d="M3 1L7 5L3 9" strokeWidth="2" /></Icon>
                    </ScrollBottom>
                </Panel>
                <Splitter aria-label="Collapse panel">
                    <svg width="6" height="10" viewBox="0 0 6 10" aria-hidden="true"><path d="M6 0V10L0 5Z" fill="#111" /></svg>
                </Splitter>
                <DocView>
                    <PageEdge />
                    <ManualPage />
                </DocView>
            </Body>

            <StatusBar>
                <NavButton aria-label="First page"><Chevron double /></NavButton>
                <NavButton aria-label="Previous page"><Chevron /></NavButton>
                <PageBox>
                    <PageSelect aria-label="Page number" defaultValue="18">
                        <option value="18">18 / 81</option>
                    </PageSelect>
                    <Caret $inline />
                </PageBox>
                <NavButton aria-label="Next page"><Chevron flip /></NavButton>
                <NavButton aria-label="Last page"><Chevron double flip /></NavButton>
                <NavButton aria-label="Previous view"><PrevViewIcon /></NavButton>
                <NavButton aria-label="Next view"><NextViewIcon /></NavButton>
                <NavButton aria-label="Page display" $push><ListIcon /></NavButton>
            </StatusBar>
            <BottomEdge />
        </Window>
    );
}
